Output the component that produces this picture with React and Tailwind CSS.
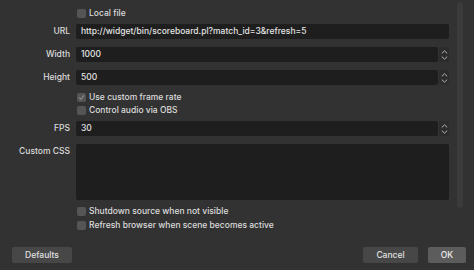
import { useState } from 'react';

function Check({ checked, label }) {
  return (
    <div className="flex items-center h-[13px] pl-[77px]">
      <div className="w-[9px] h-[9px] rounded-[2px] bg-[#555555] flex items-center justify-center">
        {checked && (
          <svg width="7" height="7" viewBox="0 0 8 8">
            <path d="M1.2 4.2 L3.2 6.2 L6.8 1.6" fill="none" stroke="#8a8a8a" strokeWidth="1.3" />
          </svg>
        )}
      </div>
      <span className="ml-[3px] text-[8.5px] font-medium text-[#dcdcdc]">{label}</span>
    </div>
  );
}

function Spinner() {
  return (
    <div className="w-[10px] h-[15px] ml-[1px] bg-[#2c2c2c] rounded-[2px] flex flex-col items-center justify-center gap-[2px]">
      <svg width="7" height="4" viewBox="0 0 7 4">
        <path d="M0.8 3.4 L3.5 0.8 L6.2 3.4" fill="none" stroke="#b5b5b5" strokeWidth="1" />
      </svg>
      <svg width="7" height="4" viewBox="0 0 7 4">
        <path d="M0.8 0.6 L3.5 3.2 L6.2 0.6" fill="none" stroke="#b5b5b5" strokeWidth="1" />
      </svg>
    </div>
  );
}

function Field({ label, value, spin }) {
  return (
    <div className="flex items-center h-[15px]">
      <div className="w-[70px] text-right text-[8.5px] font-medium text-[#dcdcdc]">{label}</div>
      <div className="ml-[6px] flex w-[373px]">
        <div className="flex-1 h-[15px] bg-[#1e1e1e] rounded-[2px] flex items-center pl-[5px] text-[8.5px] font-medium text-[#e4e4e4]">
          {value}
        </div>
        {spin && <Spinner />}
      </div>
    </div>
  );
}

export default function App() {
  const [css] = useState("");

  return (
    <div className="w-[474px] h-[270px] bg-[#323232] flex flex-col overflow-hidden" style={{ fontFamily: 'Inter, "Noto Sans", sans-serif' }}>
      <div className="flex">
        <div className="w-[457px] flex flex-col pt-[7px]">
          <Check label="Local file" />
          <div className="mt-[4px]"><Field label="URL" value="http://widget/bin/scoreboard.pl?match_id=3&refresh=5" /></div>
          <div className="mt-[8px]"><Field label="Width" value="1000" spin /></div>
          <div className="mt-[8px]"><Field label="Height" value="500" spin /></div>
          <div className="mt-[6px]"><Check checked label="Use custom frame rate" /></div>
          <Check label="Control audio via OBS" />
          <div className="mt-[4px]"><Field label="FPS" value="30" spin /></div>
          <div className="flex mt-[8px]">
            <div className="w-[70px] text-right text-[8.5px] font-medium text-[#dcdcdc] pt-[1px]">Custom CSS</div>
            <div className="ml-[6px] w-[373px] h-[56px] bg-[#1e1e1e] rounded-[2px] text-[8.5px] text-[#e4e4e4]">{css}</div>
          </div>
          <div className="mt-[5px]"><Check label="Shutdown source when not visible" /></div>
          <div className="mt-[1px]"><Check label="Refresh browser when scene becomes active" /></div>
        </div>
        <div className="w-[6px] h-[206px] mt-[2px] rounded-[3px] bg-[#3b3b3b]"></div>
      </div>
      <div className="flex items-center mt-[15px] px-[12px]">
        <button className="w-[60px] h-[16px] rounded-[2px] bg-[#474747] text-[8.5px] font-medium text-[#e0e0e0]">Defaults</button>
        <div className="flex-1"></div>
        <button className="w-[55px] h-[16px] rounded-[2px] bg-[#474747] text-[8.5px] font-medium text-[#e0e0e0]">Cancel</button>
        <button className="w-[38px] h-[16px] ml-[10px] mr-[-4px] rounded-[2px] bg-[#5c5c5c] text-[8.5px] font-medium text-[#ececec]">OK</button>
      </div>
    </div>
  );
}
